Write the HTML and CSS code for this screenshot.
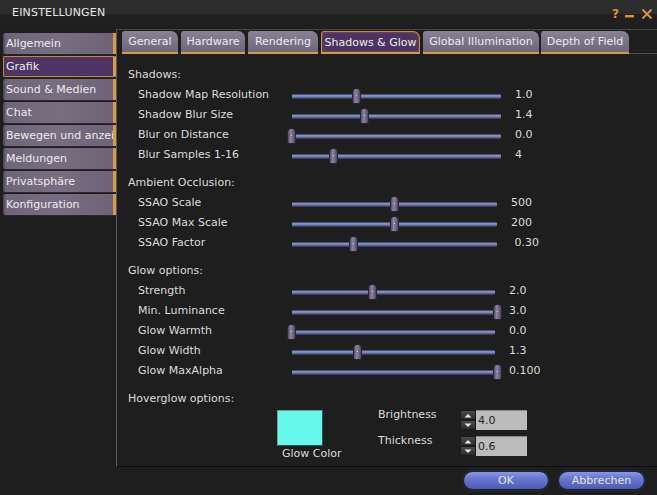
FILE: index.html
```html
<!DOCTYPE html>
<html>
<head>
<meta charset="utf-8">
<link rel="stylesheet" href="styles.css">
</head>
<body>
<div class="window">
  <div class="titlebar">
    <span class="title">EINSTELLUNGEN</span>
    <div class="controls">
      <span class="help">?</span>
      <svg class="min" width="10" height="10" viewBox="0 0 10 10"><rect x="0" y="5" width="9" height="2.4" fill="#e0952c"/></svg>
      <svg class="close" width="12" height="12" viewBox="0 0 12 12"><path d="M1.5 1.5 L10.5 10.5 M10.5 1.5 L1.5 10.5" stroke="#e0952c" stroke-width="1.8"/></svg>
    </div>
  </div>
  <div class="main">
    <div class="sidebar">
      <div class="stab">Allgemein</div>
      <div class="stab active">Grafik</div>
      <div class="stab">Sound &amp; Medien</div>
      <div class="stab">Chat</div>
      <div class="stab">Bewegen und anzei</div>
      <div class="stab">Meldungen</div>
      <div class="stab">Privatsphäre</div>
      <div class="stab">Konfiguration</div>
    </div>
    <div class="panel">
      <div class="tabstrip">
        <div class="ttab w-general">General</div>
        <div class="ttab w-hardware">Hardware</div>
        <div class="ttab w-rendering">Rendering</div>
        <div class="ttab active w-shadows">Shadows &amp; Glow</div>
        <div class="ttab w-global">Global Illumination</div>
        <div class="ttab w-depth">Depth of Field</div>
        <div class="strip-rest"></div>
      </div>
      <div class="content">
        <div class="section sec-shadows">
          <div class="heading">Shadows:</div>
          <div class="row"><span class="label">Shadow Map Resolution</span><div class="slider"><div class="track"><div class="thumb" style="left:60px"></div></div></div><span class="value">1.0</span></div>
          <div class="row"><span class="label">Shadow Blur Size</span><div class="slider"><div class="track"><div class="thumb" style="left:68px"></div></div></div><span class="value">1.4</span></div>
          <div class="row"><span class="label">Blur on Distance</span><div class="slider"><div class="track"><div class="thumb" style="left:-5px"></div></div></div><span class="value">0.0</span></div>
          <div class="row"><span class="label">Blur Samples 1-16</span><div class="slider"><div class="track"><div class="thumb" style="left:37px"></div></div></div><span class="value">4</span></div>
        </div>
        <div class="section sec-ssao">
          <div class="heading">Ambient Occlusion:</div>
          <div class="row"><span class="label">SSAO Scale</span><div class="slider"><div class="track"><div class="thumb" style="left:98px"></div></div></div><span class="value">500</span></div>
          <div class="row"><span class="label">SSAO Max Scale</span><div class="slider"><div class="track"><div class="thumb" style="left:98px"></div></div></div><span class="value">200</span></div>
          <div class="row"><span class="label">SSAO Factor</span><div class="slider"><div class="track"><div class="thumb" style="left:57px"></div></div></div><span class="value">&nbsp;0.30</span></div>
        </div>
        <div class="section sec-glow">
          <div class="heading">Glow options:</div>
          <div class="row"><span class="label">Strength</span><div class="slider"><div class="track"><div class="thumb" style="left:76px"></div></div></div><span class="value">2.0</span></div>
          <div class="row"><span class="label">Min. Luminance</span><div class="slider"><div class="track"><div class="thumb" style="left:201px"></div></div></div><span class="value">3.0</span></div>
          <div class="row"><span class="label">Glow Warmth</span><div class="slider"><div class="track"><div class="thumb" style="left:-5px"></div></div></div><span class="value">0.0</span></div>
          <div class="row"><span class="label">Glow Width</span><div class="slider"><div class="track"><div class="thumb" style="left:61px"></div></div></div><span class="value">1.3</span></div>
          <div class="row"><span class="label">Glow MaxAlpha</span><div class="slider"><div class="track"><div class="thumb" style="left:201px"></div></div></div><span class="value">0.100</span></div>
        </div>
        <div class="section sec-hover">
          <div class="heading">Hoverglow options:</div>
          <div class="hover-body">
            <div class="swatch-col">
              <div class="swatch"></div>
              <span class="swatch-label">Glow Color</span>
            </div>
            <div class="spins">
              <div class="spin-row">
                <span class="spin-label">Brightness</span>
                <div class="spinner">
                  <div class="sbtn"><svg width="8" height="5" viewBox="0 0 8 5"><path d="M0.5 4.5 L4 1 L7.5 4.5 Z" fill="#e8e8e8"/></svg></div>
                  <div class="sbtn"><svg width="8" height="5" viewBox="0 0 8 5"><path d="M0.5 0.5 L4 4 L7.5 0.5 Z" fill="#e8e8e8"/></svg></div>
                </div>
                <div class="numbox">4.0</div>
              </div>
              <div class="spin-row">
                <span class="spin-label">Thickness</span>
                <div class="spinner">
                  <div class="sbtn"><svg width="8" height="5" viewBox="0 0 8 5"><path d="M0.5 4.5 L4 1 L7.5 4.5 Z" fill="#e8e8e8"/></svg></div>
                  <div class="sbtn"><svg width="8" height="5" viewBox="0 0 8 5"><path d="M0.5 0.5 L4 4 L7.5 0.5 Z" fill="#e8e8e8"/></svg></div>
                </div>
                <div class="numbox">0.6</div>
              </div>
            </div>
          </div>
        </div>
      </div>
    </div>
  </div>
  <div class="footer">
    <button class="btn btn-ok">OK</button>
    <button class="btn btn-cancel">Abbrechen</button>
  </div>
</div>
</body>
</html>
```
FILE: styles.css
```css
* { box-sizing: border-box; }
html, body { margin: 0; padding: 0; }
body {
  background: #1e1e1e;
  font-family: "DejaVu Sans", "Liberation Sans", sans-serif;
  font-size: 11px;
  color: #dcdcdc;
  width: 657px;
  height: 495px;
  overflow: hidden;
}
.window { width: 657px; height: 495px; display: flex; flex-direction: column; }

.titlebar {
  height: 28px;
  flex: none;
  display: flex;
  align-items: flex-start;
  justify-content: space-between;
  background: linear-gradient(#2e2e2e 0, #2c2c2c 14px, #202020 14px, #1f1f1f 100%);
  padding: 6px 4px 0 12px;
}
.title { font-size: 11px; color: #e6e6e6; line-height: 14px; letter-spacing: 0.2px; }
.controls { display: flex; align-items: center; gap: 6px; height: 14px; margin-top: 1px; }
.help { color: #e0952c; font-weight: bold; font-size: 12px; line-height: 14px; }
.min { margin-top: 2px; }

.main { height: 439px; flex: none; display: flex; }
.sidebar {
  width: 116px;
  flex: none;
  padding: 5px 0 0 3px;
  display: flex;
  flex-direction: column;
  align-items: stretch;
}
.stab {
  height: 21px;
  margin-bottom: 2px;
  line-height: 22px;
  padding-left: 3px;
  color: #ececec;
  white-space: nowrap;
  overflow: hidden;
  background: linear-gradient(90deg, #4a4352 0, #6f6679 3px, #776e82 50%, #6c6376 100%);
  border-right: 3px solid #d89c40;
  border-radius: 2px 0 0 2px;
  box-shadow: 0 1px 0 #2a2530;
}
.stab.active {
  background: #4e3462;
  border: 1px solid #c48a34;
  border-right: 3px solid #d89c40;
  padding-left: 2px;
  line-height: 20px;
}

.panel {
  flex: 1;
  border-left: 1px solid #5a5a5a;
  border-top: 1px solid #454545;
  border-bottom: 1px solid #0e0e0e;
  margin-top: 1px;
  display: flex;
  flex-direction: column;
}
.tabstrip {
  display: flex;
  align-items: flex-end;
  padding-left: 5px;
  margin-top: 1px;
  height: 25px;
  gap: 3px;
}
.ttab {
  height: 23px;
  line-height: 22px;
  text-align: center;
  color: #ececec;
  background: linear-gradient(#8a8195, #6e6679);
  border-radius: 3px 7px 0 0;
  border-bottom: 2px solid #d89c40;
  white-space: nowrap;
}
.ttab.active {
  background: #4d3361;
  border: 1px solid #c88f38;
  border-bottom: 2px solid #d89c40;
  line-height: 21px;
  box-shadow: inset 0 0 3px rgba(220,160,70,0.4);
}
.w-general { width: 56px; }
.w-hardware { width: 64px; }
.w-rendering { width: 70px; }
.w-shadows { width: 99px; }
.w-global { width: 116px; }
.w-depth { width: 88px; margin-left: -1px; }
.strip-rest { flex: 1; align-self: flex-end; border-bottom: 1px solid #555; margin-left: -3px; }

.content { padding: 11px 0 0 11px; display: flex; flex-direction: column; }
.section { display: flex; flex-direction: column; margin-bottom: 8px; }
.heading { height: 20px; line-height: 20px; color: #dcdcdc; }
.row { height: 20px; display: flex; align-items: flex-start; }
.label { width: 164px; padding-left: 10px; line-height: 20px; flex: none; color: #dcdcdc; }
.slider { flex: none; height: 20px; padding-top: 9px; }
.track {
  position: relative;
  height: 5px;
  background: linear-gradient(#2a2f48 0, #6d79aa 1px, #9aa4d2 2px, #6470a2 3px, #2c3150 100%);
  border-radius: 1px;
}
.thumb {
  position: absolute;
  top: -6px;
  width: 9px;
  height: 16px;
  border-radius: 4px 4px 2px 2px;
  background: linear-gradient(90deg, #4e4862, #8a84a0 35%, #706a88 70%, #4a4460);
  border: 1px solid #2a2638;
}
.thumb::after {
  content: "";
  position: absolute;
  left: 3px;
  top: 6px;
  width: 1px;
  height: 1px;
  background: #d0d0e0;
}
.sec-shadows .slider { width: 209px; }
.sec-ssao .slider { width: 205px; }
.sec-glow .slider { width: 203px; }
.value { margin-left: 14px; line-height: 20px; color: #dcdcdc; }

.hover-body { display: flex; margin-left: 149px; margin-top: 1px; }
.swatch-col { width: 62px; flex: none; display: flex; flex-direction: column; }
.swatch {
  width: 46px;
  height: 36px;
  background: #66f8ea;
  border: 1px solid #7a9a9a;
  border-right-color: #2e5050;
  border-bottom-color: #2e5050;
}
.swatch-label { margin-left: 5px; margin-top: 1px; line-height: 14px; white-space: nowrap; }
.spins { margin-left: 39px; display: flex; flex-direction: column; gap: 6px; }
.spin-row { display: flex; height: 20px; }
.spin-label { width: 82px; line-height: 10px; padding-top: 0; }
.spinner { width: 16px; display: flex; flex-direction: column; }
.sbtn {
  height: 10px;
  background: linear-gradient(#4a4a4a, #2c2c2c);
  border: 1px solid #1a1a1a;
  border-radius: 2px;
  display: flex;
  align-items: center;
  justify-content: center;
}
.numbox {
  width: 51px;
  height: 20px;
  background: #bcbcbc;
  color: #1e1e1e;
  line-height: 20px;
  padding-left: 2px;
  border-top: 1px solid #8a8a8a;
}

.footer {
  flex: 1;
  display: flex;
  justify-content: flex-end;
  align-items: flex-start;
  padding: 4px 12px 0 0;
  gap: 9px;
}
.btn {
  height: 19px;
  border-radius: 10px;
  border: 1px solid #1c2040;
  background: linear-gradient(#8a96e6 0, #6a78d2 35%, #4d5cb4 100%);
  color: #e4e4e4;
  font-family: "DejaVu Sans", "Liberation Sans", sans-serif;
  font-size: 11px;
  padding: 0;
  box-shadow: 0 0 0 1px #2a2a2a;
}
.btn-ok { width: 86px; }
.btn-cancel { width: 87px; }
```
